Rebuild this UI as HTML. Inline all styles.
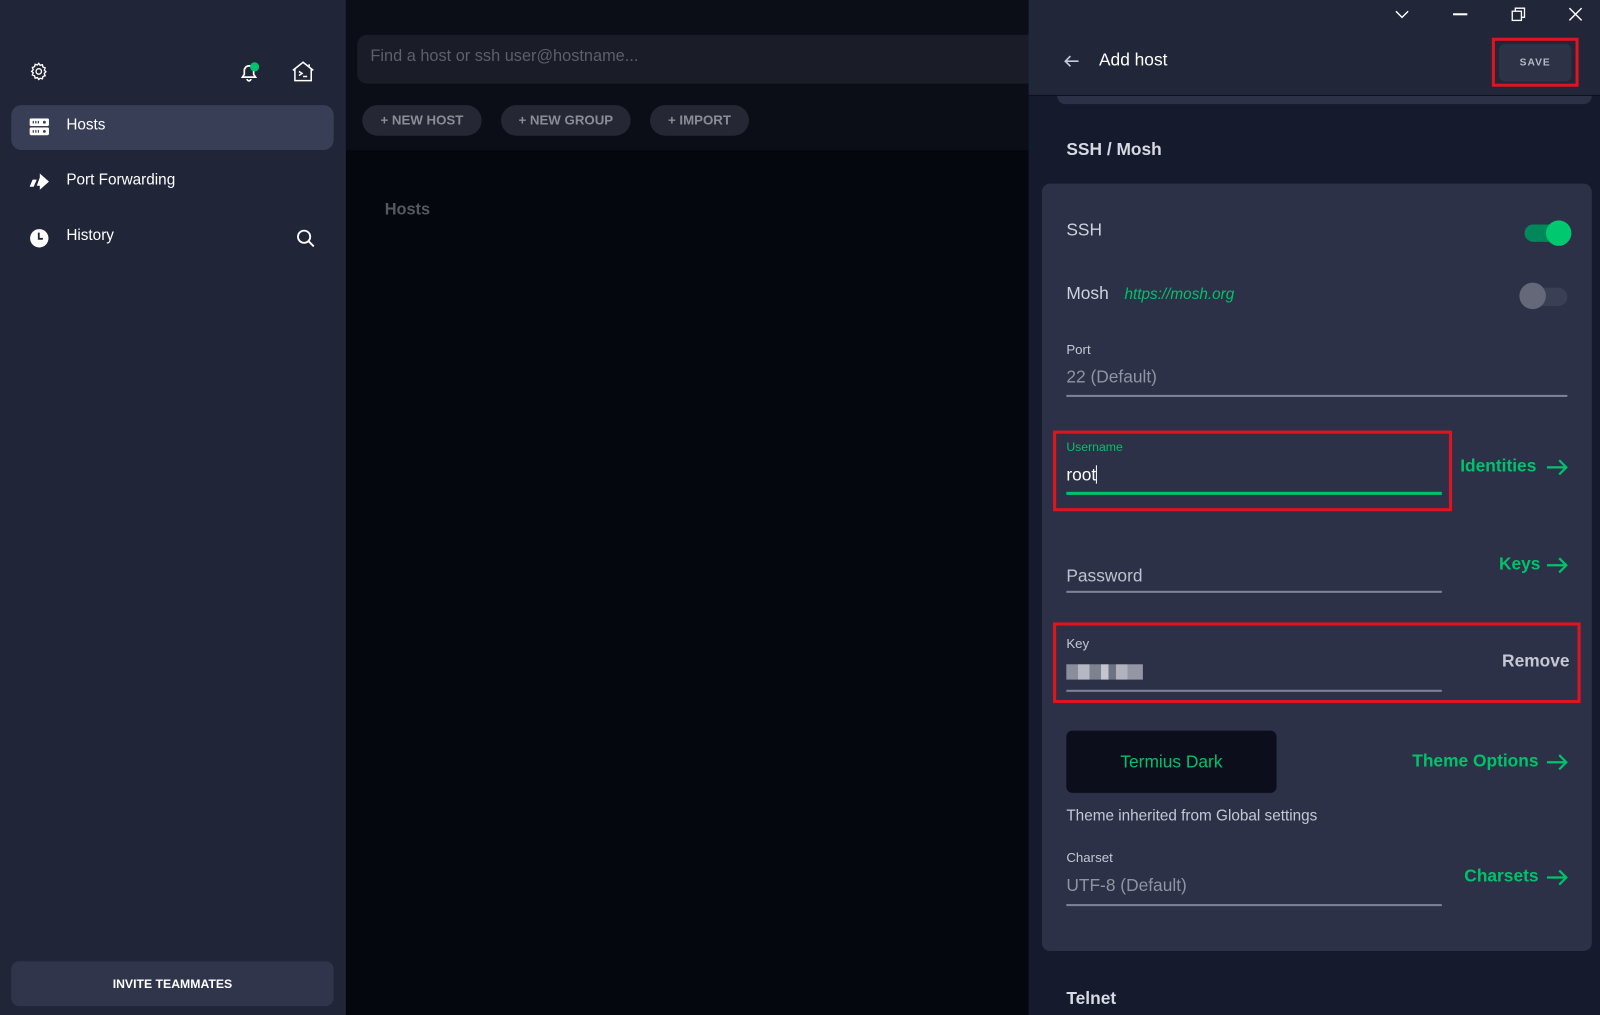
<!DOCTYPE html>
<html><head><meta charset="utf-8"><style>
html,body{margin:0;padding:0;background:#0b0d16;overflow:hidden;width:1600px;height:1015px}
#w{position:absolute;left:0;top:0;width:1568px;height:995px;transform:scale(1.020408);transform-origin:0 0;font-family:"Liberation Sans",sans-serif;}
.a{position:absolute}
#side{left:0;top:0;width:339px;height:995px;background:#212538}
#mid{left:339px;top:0;width:669px;height:995px;background:#05070f}
#midtop{left:339px;top:0;width:669px;height:147px;background:#0b0d17}
#right{left:1008px;top:0;width:560px;height:995px;background:#151a2c}
#rhead{left:1008px;top:0;width:560px;height:93px;background:#212639;border-bottom:1px solid #0d101b}
.card{background:#2c3147;border-radius:8px}
.g{color:#00c26a;font-weight:bold}
.lbl{font-size:13px;color:#c5c8d3}
.line{height:2px;background:#7d8496}
.red{border:3px solid #e0141e;box-sizing:border-box}
</style></head><body><div id="w">
<div class="a" id="side"></div>
<div class="a" id="mid"></div>
<div class="a" id="midtop"></div>
<!-- sidebar icons -->
<svg class="a" style="left:28px;top:60px" width="20" height="20" viewBox="0 0 24 24" fill="none" stroke="#fff" stroke-width="1.6"><circle cx="12" cy="12" r="3.2"/><path d="M12 2.5l1.6 2.3 2.7-.7.6 2.7 2.6 1-1 2.6 1.9 2-1.9 2 1 2.6-2.6 1-.6 2.7-2.7-.7L12 21.5l-1.6-2.3-2.7.7-.6-2.7-2.6-1 1-2.6L3.6 12l1.9-2-1-2.6 2.6-1 .6-2.7 2.7.7z"/></svg>
<svg class="a" style="left:233px;top:60px" width="22" height="22" viewBox="0 0 24 24" fill="none" stroke="#fff" stroke-width="1.8"><path d="M5 17h14l-2-3v-4a5 5 0 0 0-10 0v4z"/><path d="M10 19a2 2 0 0 0 4 0"/></svg>
<div class="a" style="left:245px;top:61px;width:9px;height:9px;border-radius:50%;background:#00c26a"></div>
<svg class="a" style="left:285px;top:59px" width="24" height="22" viewBox="0 0 24 22" fill="none" stroke="#fff" stroke-width="1.5"><path d="M2 10L12 2l10 8"/><path d="M4 8.5V20h16V8.5"/><path d="M18 4v2"/><path d="M8 11l3 2-3 2M12 16h4"/></svg>
<div class="a" style="left:11px;top:103px;width:316px;height:44px;border-radius:10px;background:#393e57"></div>
<svg class="a" style="left:29px;top:116px" width="19" height="17" viewBox="0 0 19 17"><rect x="0" y="0" width="19" height="7.5" rx="1.5" fill="#fff"/><rect x="0" y="9" width="19" height="7.5" rx="1.5" fill="#fff"/><g fill="#393e57"><rect x="3" y="2.5" width="1.2" height="2.5"/><rect x="5.5" y="2.5" width="1.2" height="2.5"/><rect x="8" y="2.5" width="1.2" height="2.5"/><rect x="3" y="11.5" width="1.2" height="2.5"/><rect x="5.5" y="11.5" width="1.2" height="2.5"/><rect x="8" y="11.5" width="1.2" height="2.5"/><circle cx="14.5" cy="3.75" r="1.4"/><circle cx="14.5" cy="12.75" r="1.4"/></g></svg>
<div class="a" style="left:65px;top:114px;font-size:15px;color:#fff">Hosts</div>
<svg class="a" style="left:29px;top:170px" width="19" height="16" viewBox="0 0 19 16" fill="#fff"><path d="M10 0l9 8-9 8v-4H7l3-8z"/><path d="M3 6h4l-3 7H0z"/></svg>
<div class="a" style="left:65px;top:168px;font-size:15px;color:#fff">Port Forwarding</div>
<svg class="a" style="left:29px;top:224px" width="19" height="19" viewBox="0 0 19 19"><circle cx="9.5" cy="9.5" r="9" fill="#fff"/><path d="M9 4v6h4" stroke="#212538" stroke-width="1.8" fill="none"/></svg>
<div class="a" style="left:65px;top:222px;font-size:15px;color:#fff">History</div>
<svg class="a" style="left:290px;top:224px" width="19" height="19" viewBox="0 0 19 19" fill="none" stroke="#fff" stroke-width="1.8"><circle cx="8" cy="8" r="6"/><path d="M12.5 12.5l5 5"/></svg>
<div class="a" style="left:11px;top:942px;width:316px;height:44px;border-radius:8px;background:#30354b;color:#fff;font-size:12px;font-weight:bold;text-align:center;line-height:44px">INVITE TEAMMATES</div>
<!-- middle -->
<div class="a" style="left:350px;top:34px;width:680px;height:48px;border-radius:10px;background:#1a1c28"></div>
<div class="a" style="left:363px;top:47px;font-size:16px;color:#5c5f6c">Find a host or ssh user@hostname...</div>
<div class="a" style="left:355px;top:103px;width:117px;height:30px;border-radius:15px;background:#252734;color:#8a8c96;font-size:13px;font-weight:bold;line-height:30px;text-align:center">+ NEW HOST</div>
<div class="a" style="left:491px;top:103px;width:127px;height:30px;border-radius:15px;background:#252734;color:#8a8c96;font-size:13px;font-weight:bold;line-height:30px;text-align:center">+ NEW GROUP</div>
<div class="a" style="left:637px;top:103px;width:97px;height:30px;border-radius:15px;background:#252734;color:#8a8c96;font-size:13px;font-weight:bold;line-height:30px;text-align:center">+ IMPORT</div>
<div class="a" style="left:377px;top:197px;font-size:16px;color:#55585f;font-weight:bold">Hosts</div>
<!-- right panel -->
<div class="a" id="right"></div>
<div class="a" style="left:1036px;top:88px;width:524px;height:14px;border-radius:0 0 8px 8px;background:#2c3147"></div>
<div class="a" id="rhead"></div>
<svg class="a" style="left:1364px;top:7px" width="20" height="14" viewBox="0 0 20 14" fill="none" stroke="#fff" stroke-width="1.4"><path d="M4 4l6 6 6-6"/></svg>
<div class="a" style="left:1424px;top:13px;width:14px;height:1.5px;background:#fff"></div>
<svg class="a" style="left:1480px;top:6px" width="16" height="16" viewBox="0 0 16 16" fill="none" stroke="#fff" stroke-width="1.3"><rect x="2" y="5" width="9" height="9"/><path d="M5 5V2h9v9h-3"/></svg>
<svg class="a" style="left:1536px;top:6px" width="16" height="16" viewBox="0 0 16 16" stroke="#fff" stroke-width="1.4"><path d="M2 2l12 12M14 2L2 14"/></svg>
<svg class="a" style="left:1041px;top:52px" width="18" height="16" viewBox="0 0 18 16" fill="none" stroke="#c8cbd6" stroke-width="1.6"><path d="M16 8H3M8 3L3 8l5 5"/></svg>
<div class="a" style="left:1077px;top:49px;font-size:17px;color:#fff">Add host</div>
<div class="a red" style="left:1462px;top:37px;width:85px;height:48px"></div>
<div class="a" style="left:1469px;top:43px;width:71px;height:37px;border-radius:6px;background:#2d3246;color:#b7bac5;font-size:10px;font-weight:bold;letter-spacing:1px;text-align:center;line-height:37px">SAVE</div>
<div class="a" style="left:1045px;top:137px;font-size:17px;font-weight:bold;color:#d7dae3">SSH / Mosh</div>
<div class="a card" style="left:1021px;top:180px;width:539px;height:752px"></div>
<div class="a" style="left:1045px;top:216px;font-size:17px;color:#cfd2dc">SSH</div>
<div class="a" style="left:1494px;top:220px;width:40px;height:17px;border-radius:9px;background:#00875a"></div>
<div class="a" style="left:1515px;top:216px;width:25px;height:25px;border-radius:50%;background:#00c86e"></div>
<div class="a" style="left:1045px;top:278px;font-size:17px;color:#cfd2dc">Mosh</div>
<div class="a" style="left:1102px;top:280px;font-size:15px;color:#00c26a;font-style:italic">https://mosh.org</div>
<div class="a" style="left:1492px;top:282px;width:44px;height:18px;border-radius:9px;background:#3a3f55"></div>
<div class="a" style="left:1489px;top:277px;width:26px;height:26px;border-radius:50%;background:#646879"></div>
<div class="a lbl" style="left:1045px;top:335px">Port</div>
<div class="a" style="left:1045px;top:360px;font-size:17px;color:#8f94a3">22 (Default)</div>
<div class="a line" style="left:1045px;top:387px;width:491px"></div>
<div class="a red" style="left:1032px;top:422px;width:391px;height:79px"></div>
<div class="a" style="left:1045px;top:431px;font-size:12px;color:#00c26a">Username</div>
<div class="a" style="left:1045px;top:456px;font-size:17px;color:#fff">root<span style="display:inline-block;width:1px;height:18px;background:#fff;vertical-align:-3px"></span></div>
<div class="a" style="left:1045px;top:482px;width:368px;height:3px;background:#00c26a"></div>
<div class="a g" style="left:1431px;top:447px;font-size:17px">Identities</div>
<div class="a g" style="left:1469px;top:543px;font-size:17px">Keys</div>
<div class="a g" style="left:1384px;top:736px;font-size:17px">Theme Options</div>
<div class="a g" style="left:1435px;top:849px;font-size:17px">Charsets</div>
<svg class="a" style="left:1515px;top:449px" width="22" height="18" viewBox="0 0 22 18" fill="none" stroke="#00c26a" stroke-width="2.2"><path d="M1 9h19M13 2l7 7-7 7"/></svg>
<svg class="a" style="left:1515px;top:545px" width="22" height="18" viewBox="0 0 22 18" fill="none" stroke="#00c26a" stroke-width="2.2"><path d="M1 9h19M13 2l7 7-7 7"/></svg>
<svg class="a" style="left:1515px;top:738px" width="22" height="18" viewBox="0 0 22 18" fill="none" stroke="#00c26a" stroke-width="2.2"><path d="M1 9h19M13 2l7 7-7 7"/></svg>
<svg class="a" style="left:1515px;top:851px" width="22" height="18" viewBox="0 0 22 18" fill="none" stroke="#00c26a" stroke-width="2.2"><path d="M1 9h19M13 2l7 7-7 7"/></svg>
<div class="a" style="left:1045px;top:555px;font-size:17px;color:#bfc3ce">Password</div>
<div class="a line" style="left:1045px;top:579px;width:368px"></div>
<div class="a red" style="left:1032px;top:610px;width:517px;height:79px"></div>
<div class="a lbl" style="left:1045px;top:623px">Key</div>
<div class="a" style="left:1045px;top:651px;width:75px;height:15px;background:linear-gradient(90deg,#8a8e9c 0 15%,#b5b8c2 15% 30%,#7d8190 30% 45%,#c4c6ce 45% 55%,#6e7282 55% 65%,#b0b3bd 65% 80%,#9497a3 80%)"></div>
<div class="a line" style="left:1045px;top:676px;width:368px"></div>
<div class="a" style="left:1472px;top:638px;font-size:17px;font-weight:bold;color:#c5c8d2">Remove</div>
<div class="a" style="left:1045px;top:716px;width:206px;height:61px;border-radius:6px;background:#0c0e1c;color:#00c26a;font-size:17px;text-align:center;line-height:61px">Termius Dark</div>
<div class="a" style="left:1045px;top:791px;font-size:15px;color:#c5c8d3">Theme inherited from Global settings</div>
<div class="a lbl" style="left:1045px;top:833px">Charset</div>
<div class="a" style="left:1045px;top:858px;font-size:17px;color:#8f94a3">UTF-8 (Default)</div>
<div class="a line" style="left:1045px;top:886px;width:368px"></div>
<div class="a" style="left:1045px;top:969px;font-size:17px;font-weight:bold;color:#d7dae3">Telnet</div>
</div></body></html>
